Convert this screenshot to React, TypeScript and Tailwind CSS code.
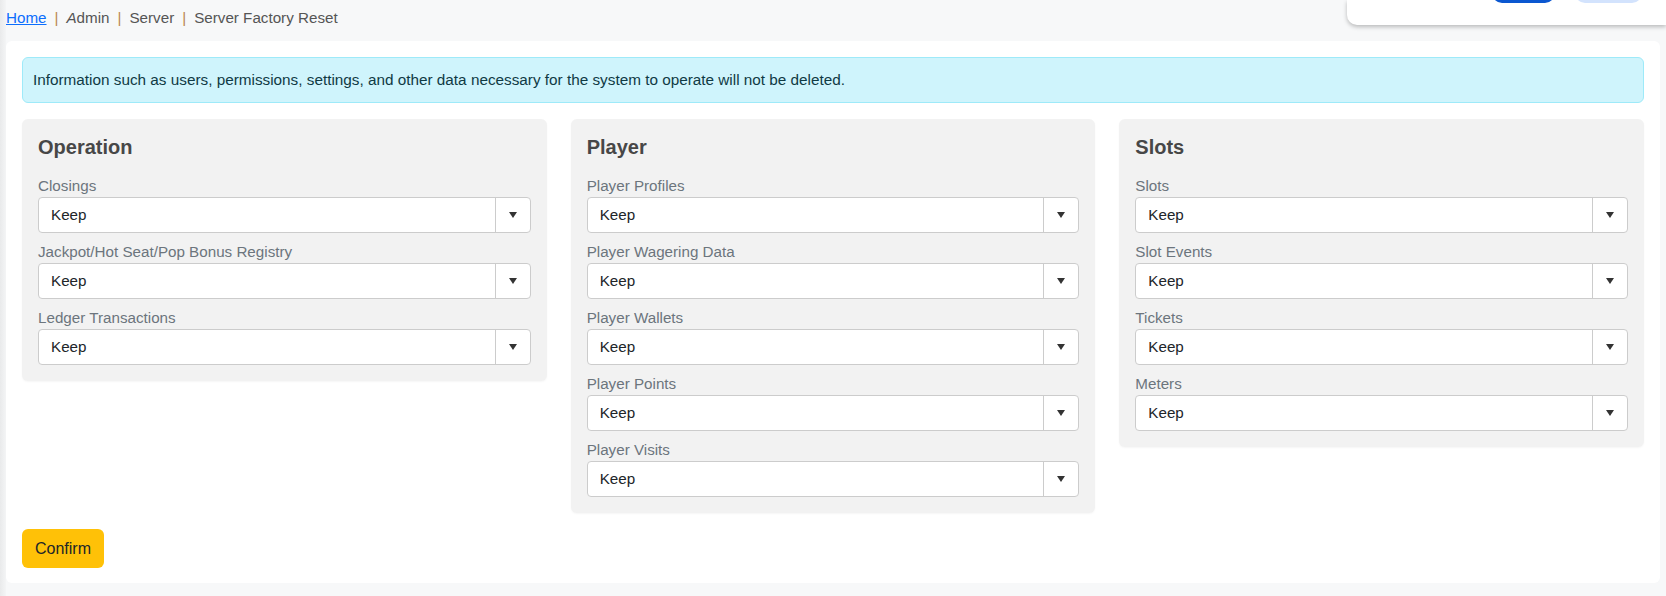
import React from "react";

const Caret = () => (
  <svg width="8" height="6" viewBox="0 0 8 6" className="block">
    <path d="M0 0 L8 0 L4 6 Z" fill="#333" />
  </svg>
);

const Field = ({ label }: { label: string }) => (
  <div className="flex flex-col">
    <div className="text-[15.2px] leading-[22px] text-[#6c757d]">{label}</div>
    <div className="flex h-[36px] bg-white border border-[#cccccc] rounded-[4px]">
      <div className="flex-1 flex items-center pl-[12px] text-[15.2px] text-[#212529]">Keep</div>
      <div className="w-[35px] border-l border-[#cccccc] flex items-center justify-center">
        <Caret />
      </div>
    </div>
  </div>
);

const Panel = ({ title, fields }: { title: string; fields: string[] }) => (
  <div className="bg-[#f2f2f2] rounded-[6px] px-4 pt-[16px] pb-[16px] shadow-[0_1px_2px_rgba(0,0,0,0.04)]">
    <div className="text-[20px] leading-[24px] font-bold text-[#474747] mb-4">{title}</div>
    <div className="flex flex-col gap-2">
      {fields.map((f) => (
        <Field key={f} label={f} />
      ))}
    </div>
  </div>
);

export default function App() {
  return (
    <div className="relative min-h-[596px] bg-[#f7f8f9] font-['Liberation_Sans',Arial,sans-serif] overflow-hidden">
      <div className="absolute top-0 left-0 w-[6px] h-[596px] bg-gradient-to-r from-[#e9eaeb] to-[#f4f5f6]" />
      <div className="absolute top-0 left-[1347px] right-0 h-[25px] bg-white rounded-bl-[10px] shadow-[0_2px_4px_rgba(0,0,0,0.25)] z-10">
        <div className="absolute top-[-17px] left-[145px] w-[63px] h-[20px] rounded-full bg-[#0b57d0]" />
        <div className="absolute top-[-17px] left-[228px] w-[67px] h-[20px] rounded-full bg-[#d3e3fd]" />
      </div>
      <div className="h-[41px] pl-[6px] pt-[7px] text-[15.2px] leading-[21px] text-[#555555] flex">
        <a href="#" className="text-[#0d6efd] underline">Home</a>
        <span className="mx-[8px] text-[#b98650]">|</span>
        <span><span className="italic">A</span>dmin</span>
        <span className="mx-[8px] text-[#b98650]">|</span>
        <span>Server</span>
        <span className="mx-[8px] text-[#b98650]">|</span>
        <span>Server Factory Reset</span>
      </div>
      <div className="mx-[6px] bg-white rounded-[6px] px-4 pt-4 pb-[15px]">
        <div className="bg-[#cff4fc] border border-[#9eeaf9] rounded-[6px] px-[10px] py-[10px] text-[15.3px] leading-[24px] text-[#0f3a44] mb-4">
          Information such as users, permissions, settings, and other data necessary for the system to operate will not be deleted.
        </div>
        <div className="grid grid-cols-3 gap-6 items-start mb-4">
          <Panel title="Operation" fields={["Closings", "Jackpot/Hot Seat/Pop Bonus Registry", "Ledger Transactions"]} />
          <Panel title="Player" fields={["Player Profiles", "Player Wagering Data", "Player Wallets", "Player Points", "Player Visits"]} />
          <Panel title="Slots" fields={["Slots", "Slot Events", "Tickets", "Meters"]} />
        </div>
        <button className="h-[39px] px-[13px] bg-[#ffc107] text-[#212529] text-[16px] rounded-[6px]">Confirm</button>
      </div>
    </div>
  );
}
